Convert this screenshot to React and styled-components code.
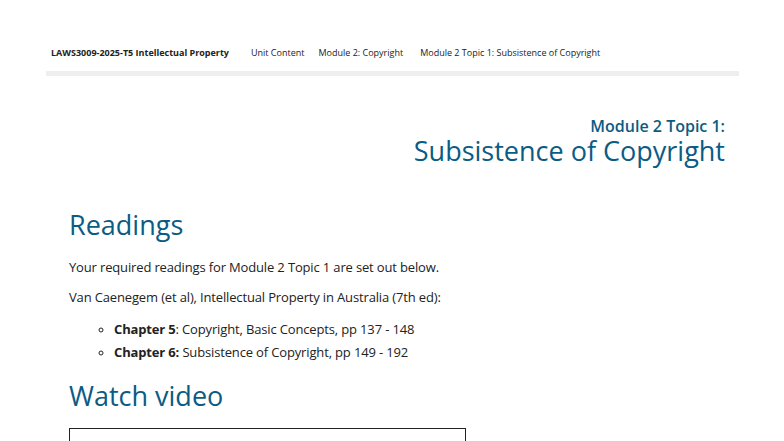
import React from "react";
import styled, { createGlobalStyle } from "styled-components";

const Global = createGlobalStyle`
  html, body { margin: 0; padding: 0; background: #fff; }
  body { font-family: "Open Sans", "Liberation Sans", sans-serif; color: #222; }
`;

const Page = styled.div`
  padding: 44px 45px 0 46px;
`;

const Breadcrumbs = styled.nav`
  display: flex;
  align-items: center;
  height: 16px;
  padding-left: 5px;
  font-size: 9px;
  letter-spacing: 0;
  color: #222;
`;

const Crumb = styled.span`
  font-weight: ${(p) => (p.$bold ? 700 : 400)};
  margin-right: ${(p) => p.$gap}px;
  white-space: nowrap;
`;

const Bar = styled.div`
  height: 5px;
  background: #eeeeee;
  margin-top: 11px;
`;

const Content = styled.main`
  padding: 0 14px 0 23px;
`;

const TitleBlock = styled.header`
  text-align: right;
  color: #0a5c84;
  margin-top: 41px;
`;

const Kicker = styled.div`
  font-size: 16px;
  font-weight: 600;
  line-height: 18px;
`;

const Title = styled.h1`
  margin: 0;
  font-size: 27px;
  font-weight: 400;
  line-height: 32px;
`;

const H2 = styled.h2`
  margin: ${(p) => p.$top}px 0 0;
  font-size: 27px;
  font-weight: 400;
  line-height: 36px;
  color: #0a5c84;
`;

const P = styled.p`
  margin: ${(p) => p.$top}px 0 0;
  font-size: 13px;
  line-height: 18px;
  letter-spacing: -0.15px;
`;

const List = styled.ul`
  margin: 12px 0 0;
  padding-left: 45px;
  list-style: circle;
  font-size: 13px;
  line-height: 23px;
  letter-spacing: -0.15px;
  li::marker { font-size: 11px; }
`;

const VideoBox = styled.div`
  margin-top: 14px;
  width: 395px;
  height: 40px;
  border: 1px solid #222;
`;

export default function App() {
  return (
    <Page>
      <Global />
      <Breadcrumbs>
        <Crumb $bold $gap={22}>LAWS3009-2025-T5 Intellectual Property</Crumb>
        <Crumb $gap={14}>Unit Content</Crumb>
        <Crumb $gap={17}>Module 2: Copyright</Crumb>
        <Crumb $gap={0}>Module 2 Topic 1: Subsistence of Copyright</Crumb>
      </Breadcrumbs>
      <Bar />
      <Content>
        <TitleBlock>
          <Kicker>Module 2 Topic 1:</Kicker>
          <Title>Subsistence of Copyright</Title>
        </TitleBlock>
        <H2 $top={40}>Readings</H2>
        <P $top={15}>Your required readings for Module 2 Topic 1 are set out below.</P>
        <P $top={12}>Van Caenegem (et al), Intellectual Property in Australia (7th ed):</P>
        <List>
          <li><strong>Chapter 5</strong>: Copyright, Basic Concepts, pp 137 - 148</li>
          <li><strong>Chapter 6:</strong> Subsistence of Copyright, pp 149 - 192</li>
        </List>
        <H2 $top={14}>Watch video</H2>
        <VideoBox />
      </Content>
    </Page>
  );
}
